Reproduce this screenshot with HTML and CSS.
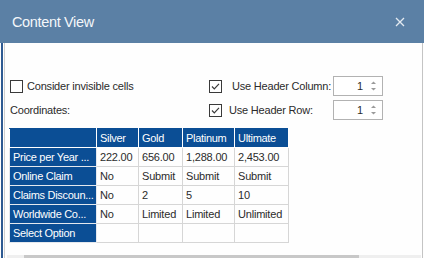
FILE: index.html
```html
<!DOCTYPE html>
<html>
<head>
<meta charset="utf-8">
<link rel="stylesheet" href="styles.css">
</head>
<body>
<div class="window">
  <div class="titlebar">
    <span class="title">Content View</span>
    <svg class="close" width="10" height="10" viewBox="0 0 10 10"><path d="M1 1 L9 9 M9 1 L1 9" stroke="#e4eaf1" stroke-width="1.3" fill="none"/></svg>
  </div>
  <div class="frame">
    <div class="panel">
      <div class="options">
        <div class="opt-left">
          <label class="check-row"><span class="box"></span><span class="lbl">Consider invisible cells</span></label>
          <div class="coords">Coordinates:</div>
        </div>
        <div class="opt-right">
          <label class="check-row gap-wide"><span class="box"><svg width="13" height="13" viewBox="0 0 13 13"><path d="M3 6.5 L5.3 8.8 L10 3.8" stroke="#3a3a3a" stroke-width="1.2" fill="none"/></svg></span><span class="lbl">Use Header Column:</span></label>
          <div class="spin"><span class="val">1</span><span class="arrows"><svg width="7" height="12" viewBox="0 0 7 12"><path d="M1 4 L3.5 1.5 L6 4 Z" fill="#9a9a9a"/><path d="M1 8 L3.5 10.5 L6 8 Z" fill="#9a9a9a"/></svg></span></div>
          <label class="check-row"><span class="box"><svg width="13" height="13" viewBox="0 0 13 13"><path d="M3 6.5 L5.3 8.8 L10 3.8" stroke="#3a3a3a" stroke-width="1.2" fill="none"/></svg></span><span class="lbl">Use Header Row:</span></label>
          <div class="spin"><span class="val">1</span><span class="arrows"><svg width="7" height="12" viewBox="0 0 7 12"><path d="M1 4 L3.5 1.5 L6 4 Z" fill="#9a9a9a"/><path d="M1 8 L3.5 10.5 L6 8 Z" fill="#9a9a9a"/></svg></span></div>
        </div>
      </div>
      <table class="grid">
        <colgroup><col class="c0"><col class="c1"><col class="c2"><col class="c3"><col class="c4"></colgroup>
        <tr class="head"><th></th><th>Silver</th><th>Gold</th><th>Platinum</th><th>Ultimate</th></tr>
        <tr><th>Price per Year ...</th><td>222.00</td><td>656.00</td><td>1,288.00</td><td>2,453.00</td></tr>
        <tr><th>Online Claim</th><td>No</td><td>Submit</td><td>Submit</td><td>Submit</td></tr>
        <tr><th>Claims Discoun...</th><td>No</td><td>2</td><td>5</td><td>10</td></tr>
        <tr><th>Worldwide Co...</th><td>No</td><td>Limited</td><td>Limited</td><td>Unlimited</td></tr>
        <tr><th>Select Option</th><td></td><td></td><td></td><td></td></tr>
      </table>
      <div class="hscroll"><div class="thumb"></div></div>
    </div>
  </div>
</div>
</body>
</html>
```

FILE: styles.css
```css
html, body { margin: 0; padding: 0; background: #ffffff; }
body { font-family: "Liberation Sans", Arial, sans-serif; font-size: 11px; letter-spacing: -0.2px; color: #2b2b2b; }
.window { width: 424px; height: 258px; overflow: hidden; display: flex; flex-direction: column; background: #fefefe; }
.titlebar { height: 43px; flex: none; background: #5b80a5; display: flex; align-items: center; justify-content: space-between; padding: 0 19px 0 12px; }
.title { color: #f4f7fa; font-size: 14.5px; letter-spacing: -0.35px; }
.close { display: block; }
.frame { flex: 1; margin-left: 1px; border-left: 2px solid #2e5a92; padding-left: 1px; display: flex; min-height: 0; }
.panel { width: 417px; border-left: 1px solid #cfcfcf; border-right: 1px solid #c4c4c4; display: flex; flex-direction: column; }
.options { display: flex; padding: 33px 0 0 5px; height: 44px; }
.opt-left { width: 199px; display: flex; flex-direction: column; }
.opt-left .check-row { height: 20px; }
.coords { height: 20px; margin-top: 4px; display: flex; align-items: center; }
.opt-right { display: grid; grid-template-columns: 124px 50px; grid-auto-rows: 20px; row-gap: 4px; }
.check-row { display: flex; align-items: center; gap: 4px; white-space: nowrap; }
.opt-right .check-row { gap: 7px; }
.opt-right .check-row.gap-wide { gap: 10px; }
.box { width: 11px; height: 11px; border: 1px solid #3a3a3a; background: #fff; display: block; position: relative; flex: none; }
.box svg { position: absolute; left: -1px; top: -1px; }
.spin { box-sizing: border-box; width: 50px; height: 20px; border: 1px solid #b2b2b2; display: flex; align-items: center; justify-content: flex-end; background: #fff; }
.val { margin-right: 7px; }
.arrows { width: 12px; display: flex; justify-content: flex-start; }
.arrows svg { display: block; }
.grid { border-collapse: collapse; margin: 8px 0 0 4px; table-layout: fixed; width: 279px; }
.c0 { width: 87px; } .c1 { width: 42px; } .c2 { width: 44px; } .c3 { width: 52px; } .c4 { width: 54px; }
.grid th, .grid td { height: 18px; padding: 0 0 0 3px; text-align: left; font-weight: normal; border: 1px solid #d6d6d6; white-space: nowrap; overflow: hidden; }
.grid th { background: #0b4e95; color: #ffffff; border-color: #e4e8ee; letter-spacing: -0.3px; }
.grid .head th { background: #0b4e95; color: #fff; border-color: #ffffff; border-top-color: #0b4e95; }
.grid td { color: #2b2b2b; }
.hscroll { margin: auto 1px 0 2px; height: 3px; background: #efefef; }
.thumb { margin-left: 17px; width: 335px; height: 3px; background: #c8c8c8; }
```
